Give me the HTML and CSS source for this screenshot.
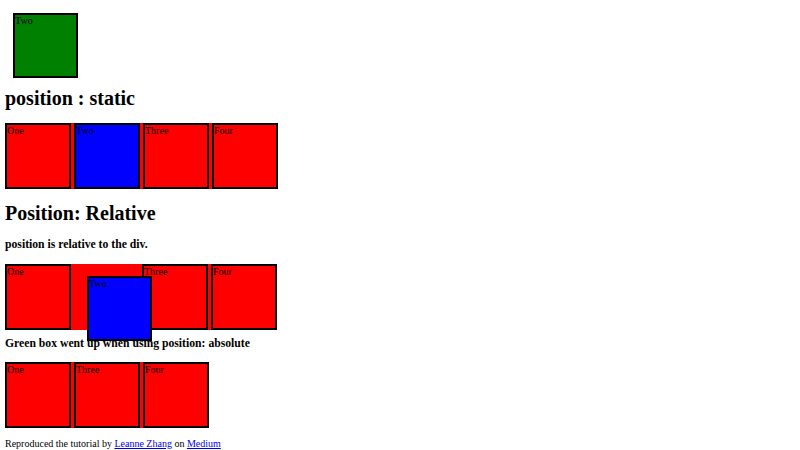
FILE: index.html
```html
<!DOCTYPE html>
<html lang="en">
<head>
<meta charset="utf-8">
<title>CSS Position</title>
<link rel="stylesheet" href="styles.css">
</head>
<body>
<main class="page">
  <h1 class="title title-first">position : static</h1>
  <div class="row row-static">
    <div class="box">One</div>
    <div class="box box-blue">Two</div>
    <div class="box">Three</div>
    <div class="box">Four</div>
  </div>

  <h1 class="title title-second">Position: Relative</h1>
  <h3 class="note note-first">position is relative to the div.</h3>
  <div class="row row-relative">
    <div class="box">One</div>
    <div class="box box-blue box-relative">Two</div>
    <div class="box">Three</div>
    <div class="box">Four</div>
  </div>

  <h3 class="note note-second">Green box went up when using position: absolute</h3>
  <div class="row row-absolute">
    <div class="box">One</div>
    <div class="box box-green box-absolute">Two</div>
    <div class="box">Three</div>
    <div class="box">Four</div>
  </div>

  <p class="credit">Reproduced the tutorial by <a href="#">Leanne Zhang</a> on <a href="#">Medium</a></p>
</main>
</body>
</html>
```

FILE: styles.css
```css
html, body {
  margin: 0;
  padding: 0;
  background: #ffffff;
}

body {
  font-family: "Liberation Serif", "Times New Roman", serif;
  font-size: 10px;
  color: #000000;
}

.page {
  padding: 0 5px;
}

.title {
  margin: 0;
  font-size: 20px;
  line-height: 23px;
  font-weight: bold;
}

.title-first {
  padding-top: 86.7px;
}

.title-second {
  margin-top: 13.7px;
}

.note {
  margin: 0;
  font-size: 11.7px;
  line-height: 14px;
  font-weight: bold;
}

.note-first {
  margin-top: 13.1px;
}

.note-second {
  margin-top: 6.7px;
}

.row {
  display: inline-flex;
  gap: 3px;
  background: #ff0000;
  vertical-align: top;
}

.row-static {
  margin-top: 13px;
}

.row-relative {
  margin-top: 11.5px;
}

.row-absolute {
  margin-top: 11px;
}

.box {
  box-sizing: border-box;
  width: 66px;
  height: 66px;
  border: 2px solid #000000;
  background: #ff0000;
  font-size: 10px;
  line-height: 11.5px;
}

.box-blue {
  background: #0000ff;
}

.box-green {
  background: #008000;
  width: 65px;
  height: 65px;
}

.box-relative {
  position: relative;
  top: 12px;
  left: 13px;
  width: 65px;
  height: 65px;
}

.box-absolute {
  position: absolute;
  top: 13px;
  left: 13px;
}

.credit {
  margin: 10px 0 0;
  font-size: 10px;
  line-height: 11.5px;
}

.credit a {
  color: #0000ee;
}
```
